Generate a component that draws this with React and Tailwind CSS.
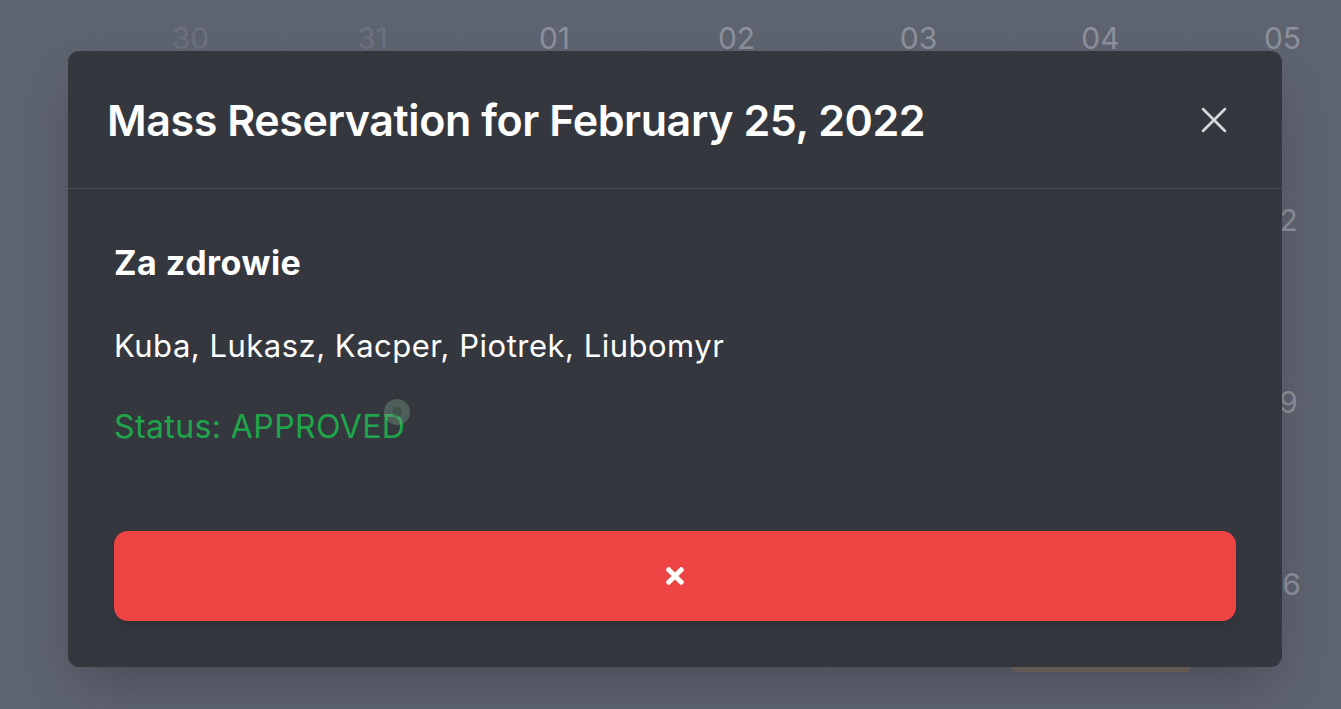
import { X } from 'lucide-react'
import { FaTimes } from 'react-icons/fa'

const rows = [
  ['30', '31', '01', '02', '03', '04', '05'],
  ['06', '07', '08', '09', '10', '11', '12'],
  ['13', '14', '15', '16', '17', '18', '19'],
  ['20', '21', '22', '23', '24', '25', '26'],
]

function Calendar() {
  return (
    <div className="h-[709px] w-full overflow-hidden bg-[#5e6370] pl-[99px] pt-[14px]">
      <div className="grid w-[1274px] grid-cols-[repeat(7,182px)] auto-rows-[182px]">
        {rows.map((week, r) =>
          week.map((day, c) => (
            <div
              key={`${r}-${c}`}
              className="flex flex-col items-center border-l border-t border-[#606572] pt-[5px]"
            >
              <span
                className={
                  r === 0 && c < 2
                    ? 'text-[30px] leading-[36px] text-[#6c717d]'
                    : 'text-[30px] leading-[36px] text-[#8b909b]'
                }
              >
                {day}
              </span>
              {r === 3 && c === 5 ? (
                <div className="mt-[30px] h-[40px] w-[178px] rounded-sm bg-[#7a6b66]" />
              ) : null}
            </div>
          ))
        )}
      </div>
    </div>
  )
}

export default function App() {
  return (
    <div className="relative font-['Inter','Noto_Sans',sans-serif]">
      <Calendar />

      <div className="absolute inset-0 flex items-start pl-[68px] pt-[51px]">
        <div className="w-[1214px] rounded-[11px] bg-[#35373f] shadow-2xl">
          <div className="flex h-[138px] items-center justify-between border-b border-[#4b4e57] pl-[39px] pr-[46px]">
            <h2 className="text-[43px] font-semibold leading-[60px] tracking-[-0.01em] text-white">
              Mass Reservation for February 25, 2022
            </h2>
            <button type="button" className="flex h-[44px] w-[44px] items-center justify-center text-[#d6d7da]">
              <X size={44} strokeWidth={1.4} />
            </button>
          </div>

          <div className="px-[46px] pb-[46px] pt-[54px]">
            <h3 className="text-[34px] font-bold leading-[40px] tracking-[0.5px] text-white">Za zdrowie</h3>
            <p className="mt-[43px] text-[31px] leading-[40px] tracking-[0.5px] text-white">
              Kuba, Lukasz, Kacper, Piotrek, Liubomyr
            </p>
            <div className="relative mt-[41px]">
              <p className="text-[32px] leading-[40px] tracking-[0.4px] text-[#1fa64a]">Status: APPROVED</p>
              <span className="absolute left-[270px] top-[-8px] flex h-[26px] w-[26px] items-center justify-center rounded-full bg-[#7fa88a]/35">
                <span className="h-[10px] w-[10px] rounded-full bg-[#2f4537]/50" />
              </span>
            </div>
            <button
              type="button"
              className="mt-[84px] flex h-[90px] w-full items-center justify-center rounded-[14px] bg-[#ef4444] text-white shadow-lg"
            >
              <FaTimes size={26} />
            </button>
          </div>
        </div>
      </div>
    </div>
  )
}
